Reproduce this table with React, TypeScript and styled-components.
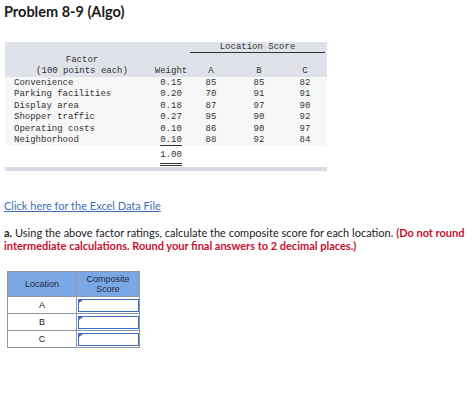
import styled, { createGlobalStyle } from "styled-components";

const GlobalStyle = createGlobalStyle`
  body {
    margin: 0;
    background: #ffffff;
    font-family: Lato, "Open Sans", Arial, sans-serif;
    color: #222222;
  }
`;

const Page = styled.div`
  padding: 0 0 0 4px;
  width: 470px;
`;

const Title = styled.h1`
  margin: 2px 0 0 0;
  font-size: 14.5px;
  line-height: 20px;
  font-weight: 700;
  color: #1a1a1a;
`;

const Panel = styled.div`
  margin-top: 20px;
  margin-left: 1px;
  width: 322px;
  font-family: "Liberation Mono", "DejaVu Sans Mono", monospace;
  font-size: 9px;
  color: #333333;
`;

const HeaderBlock = styled.div`
  background: #dfe2e8;
  display: grid;
  grid-template-columns: 145px 42px 38px 58px 34px 5px;
  grid-template-rows: 11px 13px 11px;
  line-height: 11px;
  height: 35px;
`;

const Rows = styled.div`
  background: #f7f7f7;
`;

const Row = styled.div`
  display: grid;
  grid-template-columns: 145px 42px 38px 58px 34px 5px;
  height: 11.4px;
  line-height: 12px;
`;

const TotalRow = styled(Row)`
  background: #ffffff;
  height: 19px;
  line-height: 16px;
  padding-top: 2px;
  box-sizing: border-box;
`;

const Cell = styled.div<{ $align?: "left" | "center" }>`
  text-align: ${(p) => p.$align ?? "center"};
  padding-left: ${(p) => (p.$align === "left" ? "9px" : "0")};
  white-space: pre;
`;

const FactorHead = styled(Cell)`
  padding-left: 9px;
  align-self: end;
`;

const LetterHead = styled(Cell)`
  align-self: end;
`;

const ScoreHead = styled.div`
  grid-column: 3 / 6;
  margin-left: -2px;
  margin-right: -3px;
  text-align: center;
  line-height: 11px;
  border-bottom: 1px solid #333333;
  height: 10px;
`;

const Under = styled.span<{ $double?: boolean }>`
  display: inline-block;
  line-height: 10px;
  padding-bottom: ${(p) => (p.$double ? "3px" : "0")};
  border-bottom: ${(p) => (p.$double ? "3px double #333333" : "1px solid #333333")};
`;

const Spacer = styled.div`
  height: 3px;
  background: #ffffff;
`;

const BottomBar = styled.div`
  height: 4px;
  background: #d5dae6;
`;

const LinkLine = styled.a`
  display: block;
  width: fit-content;
  margin-top: 28px;
  font-size: 11px;
  line-height: 14px;
  color: #3d6fb6;
  text-decoration: underline;
`;

const Question = styled.p`
  margin: 13px 0 0 0;
  font-size: 11px;
  line-height: 13px;
  color: #222222;
  width: 468px;
`;

const Strong = styled.b`
  font-weight: 700;
`;

const Red = styled.b`
  color: #c8102e;
  font-weight: 700;
`;

const AnswerTable = styled.table`
  margin: 19px 0 0 3px;
  border-collapse: collapse;
  font-family: Arial, "Liberation Sans", sans-serif;
  font-size: 9px;
`;

const Th = styled.th<{ $w: number }>`
  width: ${(p) => p.$w}px;
  height: 24px;
  background: #7ba7e4;
  border: 1px solid #8e97a6;
  font-weight: 400;
  color: #1e2a44;
  line-height: 10px;
  padding: 0;
`;

const Td = styled.td`
  height: 14px;
  border: 1px solid #8e97a6;
  text-align: center;
  padding: 0;
  color: #222222;
  background: #ffffff;
`;

const InputCell = styled.td`
  height: 14px;
  border: 1px solid #8e97a6;
  padding: 1px 0 1px 1px;
  background: #ffffff;
`;

const AnswerBox = styled.div`
  position: relative;
  height: 13px;
  border: 1px solid #3b6fc4;
  box-sizing: border-box;

  &::before {
    content: "";
    position: absolute;
    left: 0;
    top: 0;
    border-top: 3px solid #3b6fc4;
    border-right: 4px solid transparent;
  }
`;

const factors = [
  ["Convenience", "0.15", "85", "85", "82"],
  ["Parking facilities", "0.20", "70", "91", "91"],
  ["Display area", "0.18", "87", "97", "90"],
  ["Shopper traffic", "0.27", "95", "90", "92"],
  ["Operating costs", "0.10", "86", "90", "97"],
  ["Neighborhood", "0.10", "88", "92", "84"],
];

const App = () => {
  return (
    <>
      <GlobalStyle />
      <Page>
        <Title>Problem 8-9 (Algo)</Title>

        <Panel>
          <HeaderBlock>
            <Cell />
            <Cell />
            <ScoreHead>Location Score</ScoreHead>
            <Cell />
            <FactorHead>Factor</FactorHead>
            <Cell />
            <Cell />
            <Cell />
            <Cell />
            <Cell />
            <FactorHead>(100 points each)</FactorHead>
            <LetterHead>Weight</LetterHead>
            <LetterHead>A</LetterHead>
            <LetterHead>B</LetterHead>
            <LetterHead>C</LetterHead>
            <Cell />
          </HeaderBlock>
          <Rows>
            {factors.map((f, i) => (
              <Row key={f[0]}>
                <Cell $align="left">{f[0]}</Cell>
                <Cell>{i === factors.length - 1 ? <Under>{f[1]}</Under> : f[1]}</Cell>
                <Cell>{f[2]}</Cell>
                <Cell>{f[3]}</Cell>
                <Cell>{f[4]}</Cell>
                <Cell />
              </Row>
            ))}
          </Rows>
          <TotalRow>
            <Cell />
            <Cell>
              <Under $double>1.00</Under>
            </Cell>
          </TotalRow>
          <Spacer />
          <BottomBar />
        </Panel>

        <LinkLine href="#">Click here for the Excel Data File</LinkLine>

        <Question>
          <Strong>a.</Strong> Using the above factor ratings, calculate the composite score for each location.{" "}
          <Red>(Do not round intermediate calculations. Round your final answers to 2 decimal places.)</Red>
        </Question>

        <AnswerTable>
          <thead>
            <tr>
              <Th $w={68}>Location</Th>
              <Th $w={62}>
                Composite
                <br />
                Score
              </Th>
            </tr>
          </thead>
          <tbody>
            {["A", "B", "C"].map((loc) => (
              <tr key={loc}>
                <Td>{loc}</Td>
                <InputCell>
                  <AnswerBox />
                </InputCell>
              </tr>
            ))}
          </tbody>
        </AnswerTable>
      </Page>
    </>
  );
};

export default App;
